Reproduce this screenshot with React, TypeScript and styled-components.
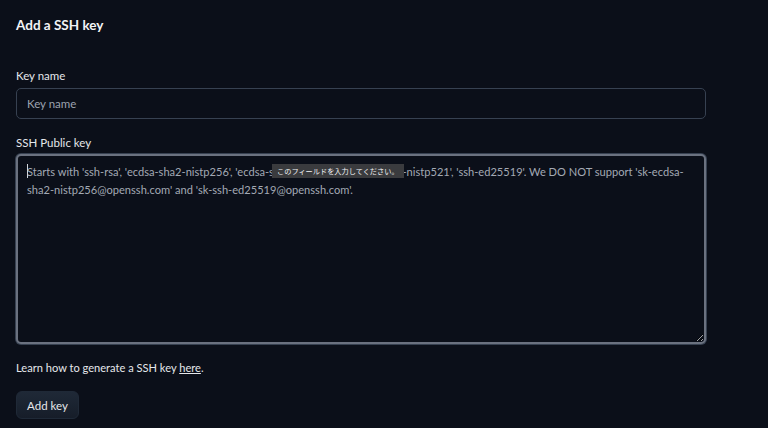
import React from "react";
import styled, { createGlobalStyle } from "styled-components";

const GlobalStyle = createGlobalStyle`
  html, body {
    margin: 0;
    padding: 0;
    background: #0b0f19;
  }

  body {
    font-family: Lato, "Noto Sans CJK JP", sans-serif;
    color: #e5e7eb;
  }
`;

export default function App() {
  return (
    <>
      <GlobalStyle />
      <Page>
        <Title>{"Add a SSH key"}</Title>
        <Form>
          <Field>
            <Label>{"Key name"}</Label>
            <Input placeholder={"Key name"} />
          </Field>
          <Field $gap={3}>
            <Label>{"SSH Public key"}</Label>
            <TextAreaWrap>
              <TextArea
                placeholder={
                  "Starts with 'ssh-rsa', 'ecdsa-sha2-nistp256', 'ecdsa-sha2-nistp384', 'ecdsa-sha2-nistp521', 'ssh-ed25519'. We DO NOT support 'sk-ecdsa-sha2-nistp256@openssh.com' and 'sk-ssh-ed25519@openssh.com'."
                }
              />
              <Caret />
              <Tooltip>{"このフィールドを入力してください。"}</Tooltip>
            </TextAreaWrap>
          </Field>
          <Help>
            {"Learn how to generate a SSH key "}
            <HelpLink href={"#"}>{"here"}</HelpLink>
            {"."}
          </Help>
          <SubmitButton type={"button"}>{"Add key"}</SubmitButton>
        </Form>
      </Page>
    </>
  );
}

const Page = styled.div`
  display: flex;
  flex-direction: column;

  width: 690px;
  height: 412px;

  padding: 16px 0 0 16px;
`;

const Title = styled.h1`
  margin: 0;

  font-size: 13.5px;
  font-weight: 700;
  line-height: 18px;

  color: #f3f4f6;
`;

const Form = styled.div`
  display: flex;
  flex-direction: column;
  align-items: flex-start;

  margin-top: 34px;
`;

const Field = styled.div<{ $gap?: number }>`
  display: flex;
  flex-direction: column;
  gap: ${(p) => p.$gap ?? 4}px;

  width: 100%;
  margin-bottom: 16px;
`;

const Label = styled.label`
  font-size: 11.5px;
  line-height: 16px;

  color: #e5e7eb;
`;

const Input = styled.input`
  height: 31px;
  box-sizing: border-box;

  padding: 0 10px;

  border: 1px solid #374151;
  border-radius: 5px;

  background: #0b0f19;
  color: #e5e7eb;

  font-family: inherit;
  font-size: 11.5px;

  outline: none;

  &::placeholder {
    color: #9ca3af;
  }
`;

const TextAreaWrap = styled.div`
  position: relative;
  width: 100%;
`;

const TextArea = styled.textarea`
  display: block;

  width: 100%;
  height: 190px;
  box-sizing: border-box;

  padding: 7px 9px;

  border: 2px solid #6b7280;
  border-radius: 5px;

  background: #0b0f19;
  color: #e5e7eb;
  box-shadow: 0 0 0 1px #374151;

  font-family: inherit;
  font-size: 11.1px;
  line-height: 18px;

  resize: vertical;
  outline: none;

  &::placeholder {
    color: #a3a9b4;
  }
`;

const Caret = styled.span`
  position: absolute;
  left: 11px;
  top: 10px;

  width: 1px;
  height: 14px;

  background: #d1d5db;
`;

const Tooltip = styled.div`
  position: absolute;
  left: 256px;
  top: 10px;

  padding: 0 5px;

  background: #3a3b3e;
  color: #f3f4f6;

  font-family: "Noto Sans CJK JP", sans-serif;
  font-size: 7.2px;
  line-height: 14px;
  white-space: nowrap;
`;

const Help = styled.p`
  margin: 0 0 15px;

  font-size: 11.1px;
  line-height: 16px;

  color: #e5e7eb;
`;

const HelpLink = styled.a`
  color: #e5e7eb;
  text-decoration: underline;
`;

const SubmitButton = styled.button`
  width: 63px;
  height: 28px;

  border: 1px solid #1f2937;
  border-radius: 6px;

  background: linear-gradient(#1f2937, #161d29);
  color: #e5e7eb;

  font-family: inherit;
  font-size: 11.5px;

  cursor: pointer;
`;
